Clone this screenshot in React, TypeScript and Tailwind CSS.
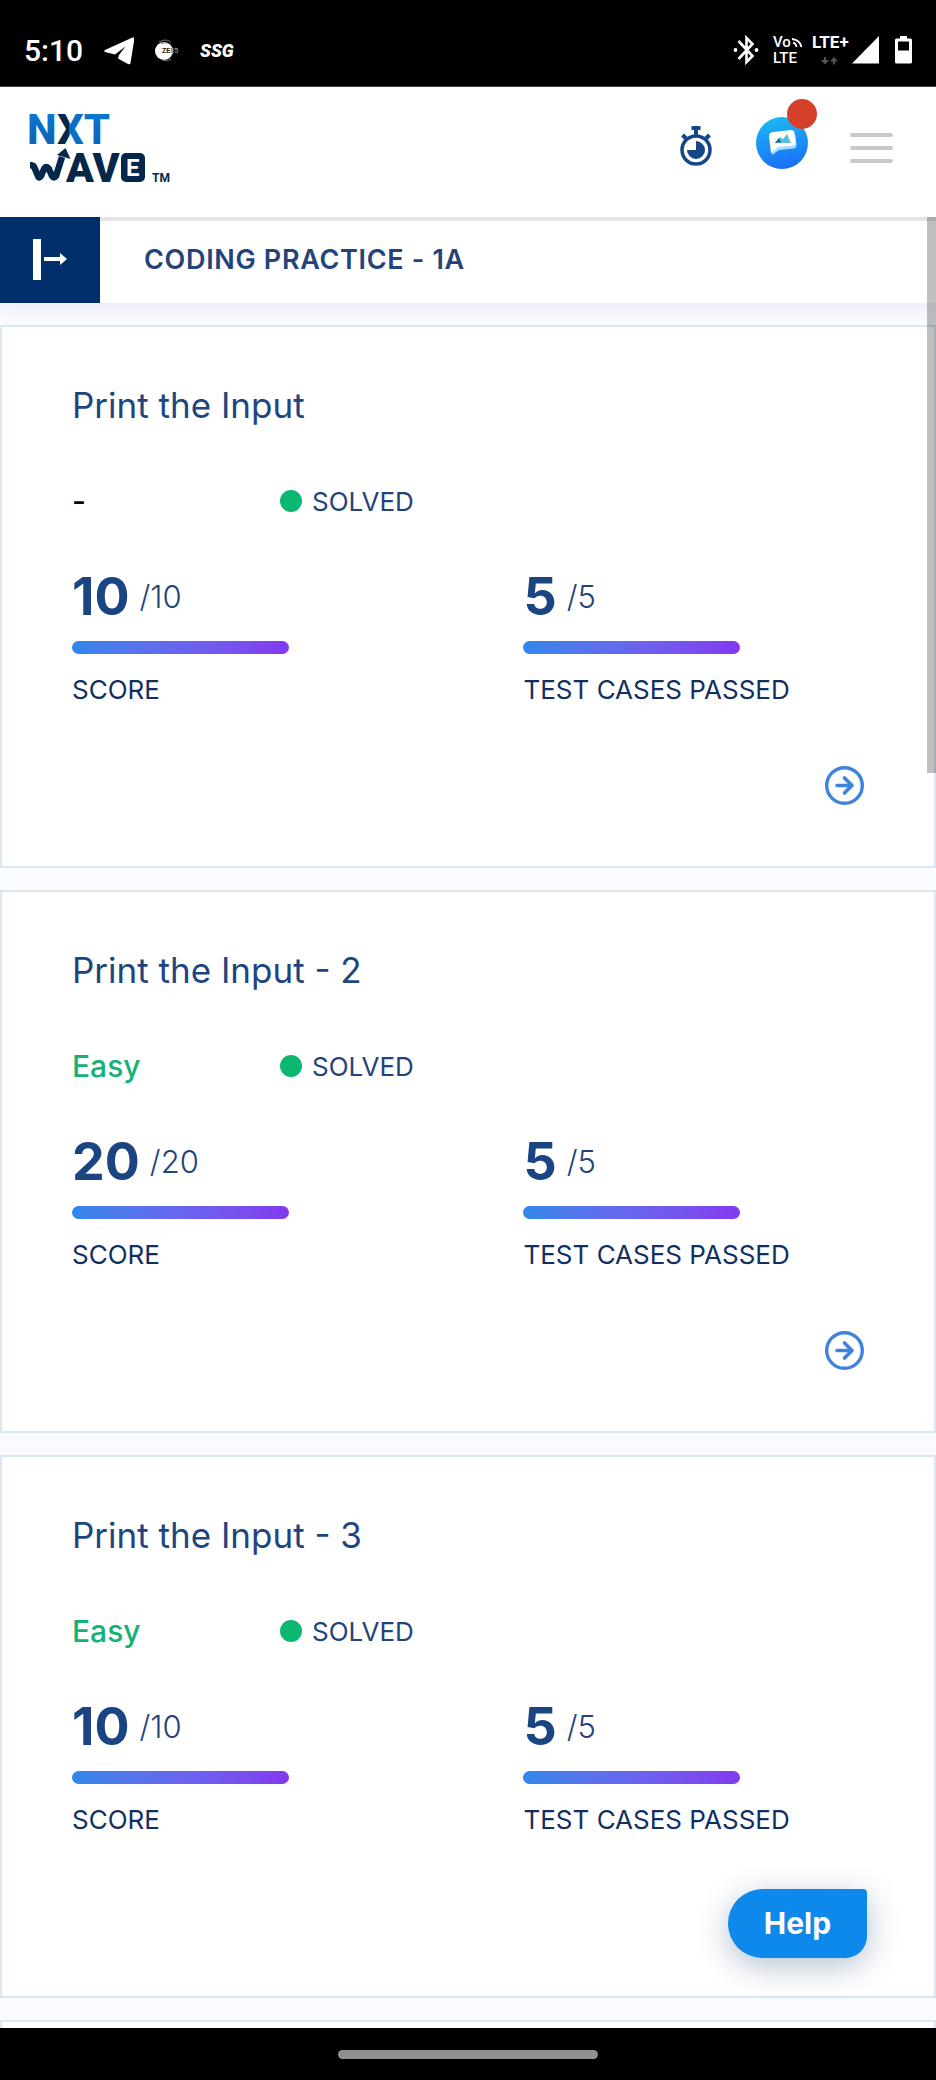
import React from "react";

interface Problem {
    title: string;
    level?: string;
    score: number;
    maxScore: number;
    passed: number;
    totalCases: number;
}

const problems: Problem[] = [
    { title: "Print the Input", score: 10, maxScore: 10, passed: 5, totalCases: 5 },
    { title: "Print the Input - 2", level: "Easy", score: 20, maxScore: 20, passed: 5, totalCases: 5 },
    { title: "Print the Input - 3", level: "Easy", score: 10, maxScore: 10, passed: 5, totalCases: 5 },
];

const StatusBar: React.FC = () => (
    <div className="flex h-[87px] shrink-0 items-center justify-between border-b border-[#444] bg-black pt-4 pr-4 pl-6 font-[Roboto,sans-serif] text-white">
        <div className="flex items-center">
            <span className="w-20 text-[30px] leading-8 font-medium">5:10</span>
            {/* Telegram */}
            <svg width="30" height="28" viewBox="0 0 30 28" className="mr-5" fill="currentColor">
                <path d="M1 13 28.5.6Q31 0 30.300 2.500L26.500 26Q26 28 24 27L14 21.500 15 18 21.500 9.500 11 17.500 1 15Q-.5 14 1 13Z" />
            </svg>
            <svg width="26" height="24" viewBox="0 0 26 24" className="mr-5">
                <circle cx="10" cy="12" r="9" fill="#fff" />
                <path d="M5 3Q12-1 17 3M7 5Q12 2 17 6M8 21Q13 23 17 20" fill="none" stroke="#777" strokeWidth="1" />
                <text x="8" y="14" fontSize="7" fontWeight="700" fill="#222">
                    ZE<tspan fill="#888">E5</tspan>
                </text>
            </svg>
            <span className="text-lg font-black italic">SSG</span>
        </div>
        <svg width="190" height="40" viewBox="0 3 190 40" fill="none" stroke="#fff">
            {/* Bluetooth */}
            <path d="M8.500 13 22.500 28 16.500 34V10L22.500 16 8.500 31" strokeWidth="2.600" />
            <circle cx="5.500" cy="22" r="1.900" fill="#fff" stroke="none" />
            <circle cx="26.500" cy="22" r="1.900" fill="#fff" stroke="none" />
            {/* VoLTE */}
            <g fill="#fff" stroke="none" fontWeight="500">
                <text x="43" y="19" fontSize="15">
                    Vo
                </text>
                <text x="43" y="35" fontSize="15">
                    LTE
                </text>
                <text x="82" y="20" fontSize="17" fontWeight="700">
                    LTE+
                </text>
            </g>
            <path d="M63 15Q66 15 66.500 19M62 11Q70 12 71.500 19" strokeWidth="1.800" />
            <path d="M94 29v3h-3l4 4.500 4-4.500h-3v-3ZM103 36.500v-3h-3l4-4.500 4 4.500h-3v3Z" fill="#555" stroke="none" />
            <path d="M122 35.500 149 8V35.500Z" fill="#fff" stroke="none" />
            {/* Battery */}
            <path
                d="M170 8h7v2.500h3.500q1.500 0 1.500 1.500v22q0 1.500-1.500 1.500h-14q-1.500 0-1.500-1.500V12q0-1.500 1.500-1.500h3.500ZM168 13.500v9h11v-9Z"
                fill="#fff"
                fillRule="evenodd"
                stroke="none"
            />
        </svg>
    </div>
);

const Logo: React.FC = () => (
    <svg
        width="150"
        height="78"
        viewBox="0 0 150 78"
        role="img"
        aria-label="NxtWave"
        fontFamily="Roboto, sans-serif"
        className="overflow-visible"
    >
        <defs>
            <linearGradient id="logo-x" gradientUnits="userSpaceOnUse" x1="31" y1="0" x2="59" y2="0">
                <stop offset="0.500" stopColor="#04284a" />
                <stop offset="0.500" stopColor="#0b6fc9" />
            </linearGradient>
            <linearGradient id="logo-blue" gradientUnits="userSpaceOnUse" x1="0" y1="5" x2="0" y2="35">
                <stop offset="0" stopColor="#0d76d2" />
                <stop offset="1" stopColor="#0d62b4" />
            </linearGradient>
        </defs>
        <text x="3" y="35" fontSize="42" fontWeight="800" fill="url(#logo-blue)">
            N<tspan fill="url(#logo-x)">X</tspan>T
        </text>
        <text x="42" y="73" fontSize="41" fontWeight="900" fill="#04284a">
            AV
        </text>
        <path
            d="M6 56Q10 56 11 60L14 67Q15 70 17 67L20 60Q22 56 25 60L28 67Q30 70 32 67L38 48"
            fill="none"
            stroke="#04284a"
            strokeWidth="6.500"
            strokeLinejoin="round"
        />
        <path d="M33 46 41.500 39 46.500 50Z" fill="#04284a" />
        <rect x="97" y="44" width="24" height="29" rx="5" fill="#04284a" />
        <text x="102" y="67" fontSize="24" fontWeight="700" fill="#fff">
            E
        </text>
        <text x="128" y="73" fontSize="12" fontWeight="700" fill="#04284a">
            TM
        </text>
    </svg>
);

const Header: React.FC = () => (
    <header className="flex h-[130px] shrink-0 items-center justify-between bg-white pr-[43px] pb-2 pl-6">
        <Logo />
        <div className="flex items-center">
            <button aria-label="Timer" className="mr-11 mb-1">
                <svg width="32" height="40" viewBox="0 0 32 40" fill="none" stroke="#17458a">
                    <circle cx="16" cy="24" r="14" strokeWidth="3.500" />
                    <path d="M11.500 2h9M16 2v8M2.500 9 6 12.500M29.500 9 26 12.500" strokeWidth="4" />
                    <path d="M16 24V15A9 9 0 1 1 7 24Z" fill="#17458a" stroke="none" />
                </svg>
            </button>
            <button aria-label="Messages" className="mr-8">
                <svg width="62" height="102" viewBox="0 -10 62 102">
                    <defs>
                        <linearGradient id="chat" x1="0.400" y1="0" x2="0.600" y2="1">
                            <stop offset="0" stopColor="#1cb8f5" />
                            <stop offset="1" stopColor="#1a6cf6" />
                        </linearGradient>
                    </defs>
                    <circle cx="26" cy="36" r="26" fill="url(#chat)" />
                    <path d="M18 28 36 26Q39 26 39.500 29L40.500 38Q40.500 41 38 41.500L23 43 16 48 14 31Q14 28 18 28Z" fill="#a9dcfb" />
                    <path d="M17 25 35 23Q38 23 38.500 26L39.500 35Q39.500 38 37 38.500L22 40 15 46 13 29Q13 25.500 17 25Z" fill="#fff" />
                    <path d="M19 36 24 30 27 32 31 27 35 36Z" fill="#55bfdc" />
                    <path d="M19 36 23 31 25 35Z" fill="#17658c" />
                    {/* Unread badge */}
                    <circle cx="46" cy="7" r="15" fill="#d5402b" />
                </svg>
            </button>
            <button aria-label="Menu" className="flex w-[43px] flex-col gap-[9px]">
                <span className="h-1 rounded-full bg-[#c9c9c9]" />
                <span className="h-1 rounded-full bg-[#c9c9c9]" />
                <span className="h-1 rounded-full bg-[#c9c9c9]" />
            </button>
        </div>
    </header>
);

const Stat: React.FC<{ value: number; total: number; label: string }> = ({ value, total, label }) => (
    <div>
        <div className="flex items-center gap-2.5">
            <span className="text-[52px] leading-16 font-bold text-[#1b4483]">{value}</span>
            <span className="text-[31px] leading-10 font-light text-[#24437a]">/{total}</span>
        </div>
        <div className="mt-3 h-[13px] w-[217px] rounded-full bg-linear-to-r from-[#2f86ec] to-[#8338f0]" />
        <p className="mt-4 text-[26px] leading-10 text-[#12305f]">{label}</p>
    </div>
);

const ProblemCard: React.FC<{ problem: Problem }> = ({ problem }) => (
    <article className="flex shrink-0 flex-col border-2 border-[#dbe7f2] bg-white px-[70px] pt-[54px] pb-[61px]">
        <h2 className="text-[35px] leading-12 text-[#1f457f]">{problem.title}</h2>
        <div className="mt-[52px] flex h-10 items-center">
            {problem.level ? (
                <span className="w-52 text-[30px] font-medium text-[#14b277]">{problem.level}</span>
            ) : (
                <span className="w-52 text-[30px] font-medium text-black">-</span>
            )}
            <span className="mr-2.5 size-[22px] rounded-full bg-[#0bb872]" />
            <span className="text-[26px] text-[#24437a]">SOLVED</span>
        </div>
        <div className="mt-11 grid grid-cols-[57%_1fr]">
            <Stat value={problem.score} total={problem.maxScore} label="SCORE" />
            <Stat value={problem.passed} total={problem.totalCases} label="TEST CASES PASSED" />
        </div>
        <button aria-label={`Open ${problem.title}`} className="mt-14 self-end">
            <svg width="39" height="39" viewBox="0 0 39 39" fill="none" stroke="#3f83dc" strokeLinecap="round" strokeLinejoin="round">
                <circle cx="19.500" cy="19.500" r="17.800" strokeWidth="3.400" />
                <path d="M12 19.500h15M19.500 12 27 19.500 19.500 27" strokeWidth="3.600" />
            </svg>
        </button>
    </article>
);

const App: React.FC = () => (
    <div className="flex h-screen flex-col bg-[#fafbff] font-[Inter,sans-serif]">
        <StatusBar />
        <Header />
        <div className="relative flex min-h-0 flex-1 flex-col overflow-hidden">
            <div className="flex h-[86px] shrink-0 items-center bg-white shadow-[0_4px_18px_rgba(60,90,200,0.10)]">
                <button aria-label="Open sidebar" className="flex h-full w-[100px] items-center justify-center bg-[#012f6b]">
                    <svg width="36" height="42" viewBox="0 0 36 42" fill="#fff">
                        <path d="M1 0h8v41H1ZM12 18h16v-4l7 6-7 6v-4H12Z" />
                    </svg>
                </button>
                <div className="flex h-full flex-1 items-center pl-11 shadow-[inset_0_4px_1px_#e4e4e8]">
                    <h1 className="text-[27px] font-semibold tracking-wide text-[#24437a]">CODING PRACTICE - 1A</h1>
                </div>
            </div>
            <main className="flex min-h-0 flex-1 flex-col gap-[22px] overflow-hidden pt-[22px]">
                {problems.map((p) => (
                    <ProblemCard key={p.title} problem={p} />
                ))}
                <article className="flex-1 border-2 border-b-0 border-[#dbe7f2] bg-white" />
            </main>

            {/* Scroll thumb */}
            <div className="absolute top-0 right-0 h-[556px] w-[9px] bg-black/25" />

            <button className="absolute right-[69px] bottom-[70px] h-[69px] w-[139px] rounded-l-[35px] rounded-tr rounded-br-[22px] bg-[#0c89ea] text-[30px] font-bold text-white shadow-[0_8px_32px_rgba(10,50,100,0.3)]">
                Help
            </button>
        </div>
        <div className="flex h-[52px] shrink-0 items-center justify-center bg-black">
            <div className="h-[9px] w-[260px] rounded-full bg-[#8f8f8f]" />
        </div>
    </div>
);

export default App;
